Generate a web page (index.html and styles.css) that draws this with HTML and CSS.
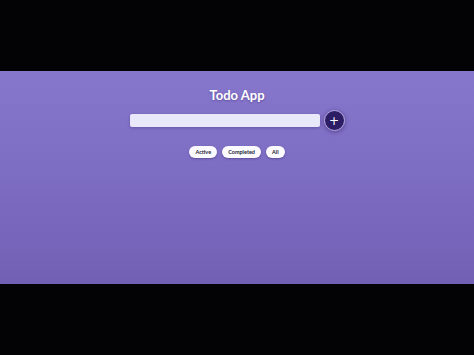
FILE: index.html
```html
<!DOCTYPE html>
<html lang="en">
<head>
    <meta charset="UTF-8">
    <title>Todo App</title>
    <link rel="stylesheet" href="styles.css">
</head>
<body>
    <div class="screen">
        <div class="app">
            <h1 class="title">Todo App</h1>
            <div class="form">
                <input type="text" class="todo-input">
                <button class="add-btn">+</button>
            </div>
            <ul class="filters">
                <li>Active</li>
                <li>Completed</li>
                <li>All</li>
            </ul>
        </div>
    </div>
</body>
</html>
```

FILE: styles.css
```css
* {
    margin: 0;
    padding: 0;
    box-sizing: border-box;
}
html, body {
    height: 100%;
    background: #030205;
}
body {
    font-family: Lato, "Liberation Sans", sans-serif;
    padding-top: 71px;
}
.app {
    height: 213px;
    background: linear-gradient(180deg, #8676cc 0%, #7c6cc2 50%, #7260b4 100%);
    display: flex;
    flex-direction: column;
    align-items: center;
    padding-top: 16px;
}
.title {
    color: #fff;
    font-size: 13px;
    font-weight: 700;
    line-height: 16px;
    text-shadow: 0 1px 2px rgba(40, 20, 80, 0.35);
}
.form {
    display: flex;
    align-items: center;
    gap: 4px;
    margin-top: 7px;
}
.todo-input {
    width: 190px;
    height: 13px;
    border: none;
    border-radius: 2px;
    background: #e9e8fb;
    box-shadow: 0 1px 3px rgba(40, 20, 90, 0.3);
    outline: none;
}
.add-btn {
    width: 21px;
    height: 21px;
    border-radius: 50%;
    border: 1.5px solid #b9aee8;
    background: #2c1d64;
    color: #fff;
    font-family: "DejaVu Sans", sans-serif;
    font-size: 12px;
    line-height: 16px;
    font-weight: 400;
    box-shadow: 0 1px 4px rgba(30, 15, 70, 0.45);
}
.filters {
    list-style: none;
    display: flex;
    gap: 5px;
    margin-top: 15px;
}
.filters li {
    background: #fbfaff;
    color: #231f33;
    font-size: 5.5px;
    font-weight: 700;
    height: 12px;
    line-height: 12px;
    padding: 0 6px;
    border-radius: 6px;
    box-shadow: 0 1px 2px rgba(30, 15, 70, 0.3);
}
```
